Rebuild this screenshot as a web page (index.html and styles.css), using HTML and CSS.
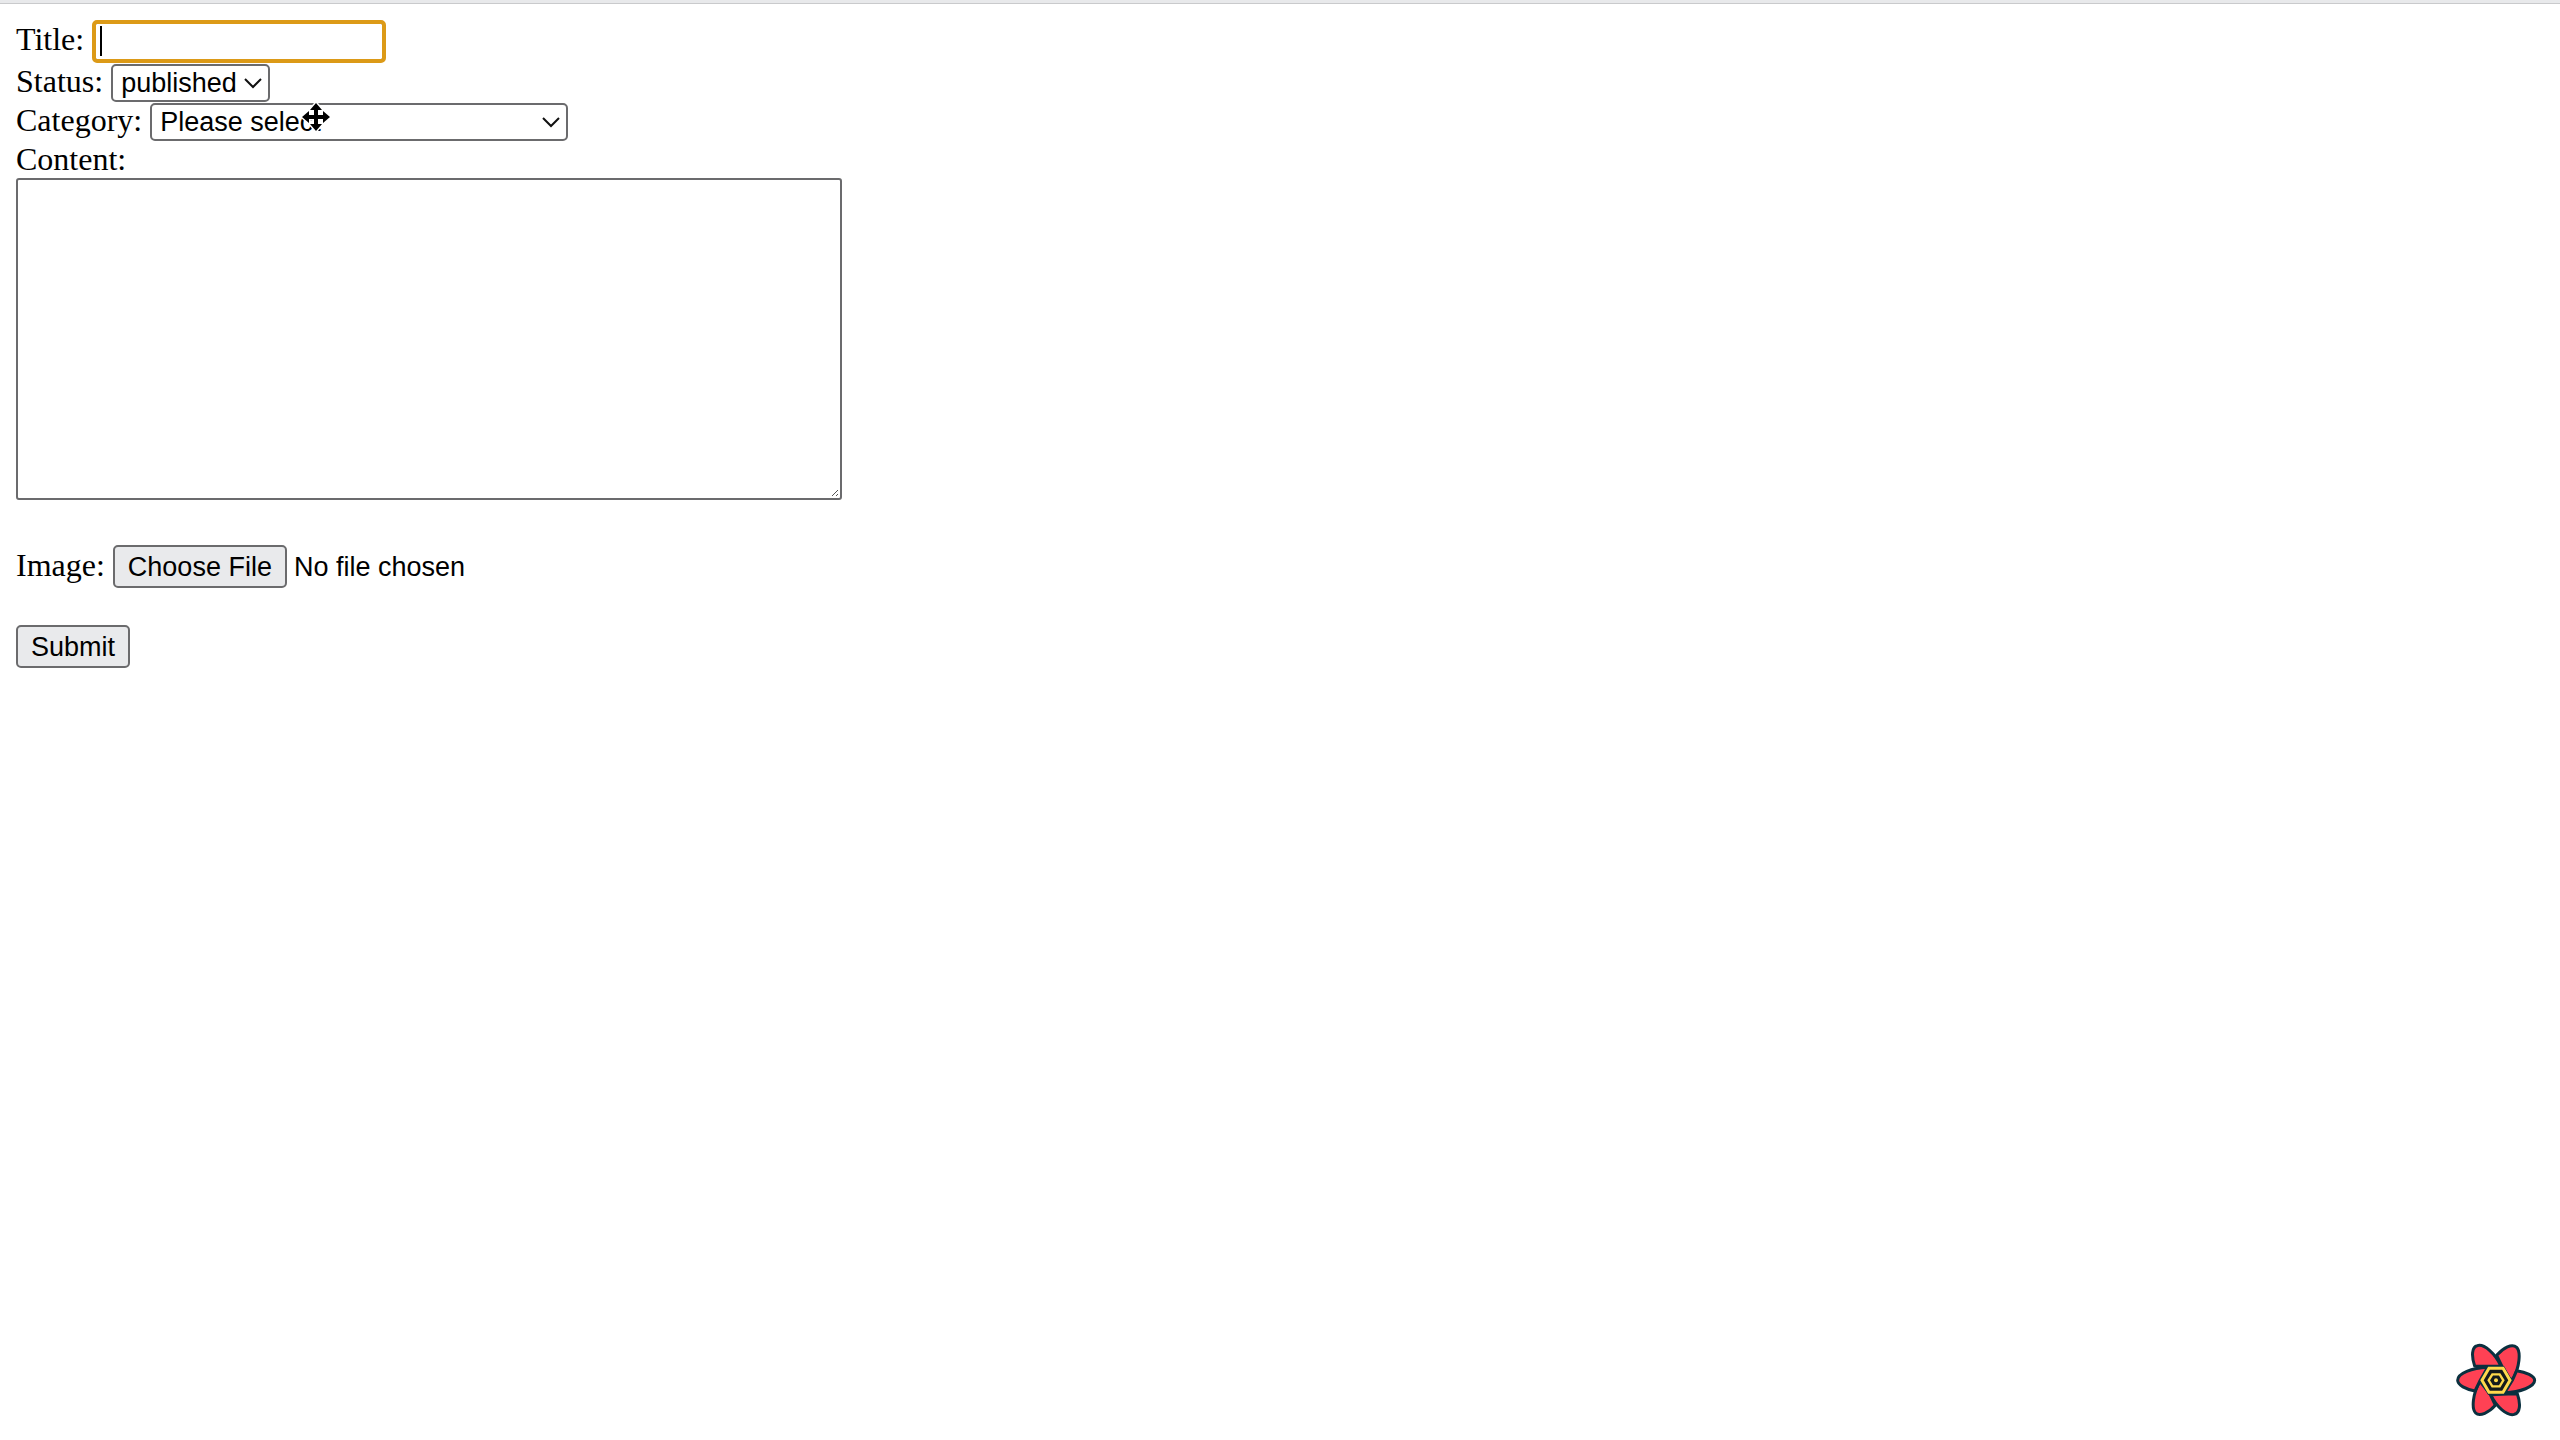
FILE: index.html
```html
<!DOCTYPE html>
<html lang="en">
<head>
<meta charset="utf-8">
<title>Post form</title>
<link rel="stylesheet" href="styles.css">
</head>
<body>
<div class="top-edge"></div>
<form class="post-form">
  <div class="row row-title">
    <label for="title">Title:</label>
    <span class="field"><input class="text-input" id="title" type="text"><span class="caret"></span></span>
  </div>
  <div class="row">
    <label for="status">Status:</label>
    <span class="field">
      <select class="select select-status" id="status"><option>published</option></select>
      <svg class="chevron" viewBox="0 0 18 12" aria-hidden="true"><path d="M1 2l8 8 8-8"/></svg>
    </span>
  </div>
  <div class="row">
    <label for="category">Category:</label>
    <span class="field">
      <select class="select select-category" id="category"><option>Please select</option></select>
      <svg class="chevron" viewBox="0 0 18 12" aria-hidden="true"><path d="M1 2l8 8 8-8"/></svg>
      <svg class="pointer" viewBox="0 0 30 30" aria-hidden="true"><path d="M15 1l6 7h-4v5h5V9l7 6-7 6v-4h-5v5h4l-6 7-6-7h4v-5H8v4l-7-6 7-6v4h5V8H9z"/></svg>
    </span>
  </div>
  <div class="row row-content"><label for="content">Content:</label></div>
  <div class="area">
    <textarea class="textarea" id="content"></textarea>
    <svg class="grip" viewBox="0 0 8 8" aria-hidden="true"><path d="M1 7l6-6M5 7l2-2"/></svg>
  </div>
  <div class="row row-file">
    <label for="image">Image:</label>
    <input class="file" id="image" type="file">
  </div>
  <button class="button" type="submit">Submit</button>
</form>
<button class="devtools" type="button" aria-label="Open query devtools">
  <svg viewBox="45 38 246 222" aria-hidden="true">
    <g fill="#ff4154" stroke="#0b303f" stroke-width="9" stroke-linejoin="round">
      <path d="M104 107C94 78 95 49 112 46C132 40 166 69 183 108Z"/>
      <path d="M170 75C190 52 216 38 230 51C243 64 239 111 218 148L207 144L186 108Z"/>
      <path d="M230 121C258 125 284 137 284 150C284 169 241 186 194 187L218 148Z"/>
      <path d="M232 190C243 222 240 248 223 252C202 258 169 230 152 193L204 191Z"/>
      <path d="M166 225C148 246 119 260 107 248C94 235 98 190 120 153L151 193Z"/>
      <path d="M105 182C78 177 53 165 53 150C53 129 96 113 143 111L119 153Z"/>
    </g>
    <path d="M144 107h48l25 43-25 43h-48l-25-43z" fill="#0b303f"/>
    <path d="M147 114h42l21 36-21 36h-42l-21-36z" fill="#151a1c" stroke="#ffd94c" stroke-width="9"/>
    <path d="M157 132h22l11 18-11 18h-22l-11-18z" fill="#151a1c" stroke="#ffd94c" stroke-width="7"/>
    <circle cx="168" cy="150" r="6" fill="#ffd94c"/>
  </svg>
</button>
</body>
</html>
```
FILE: styles.css
```css
* { box-sizing: border-box; }

body {
  margin: 0;
  background: #fff;
  color: #000;
  font: 32px/36px "Liberation Serif", "Times New Roman", serif;
}

.top-edge {
  height: 4px;
  background: #e8e9eb;
  border-bottom: 1px solid #c9cacc;
}

.post-form { padding: 17px 16px 16px; }

.row {
  display: flex;
  align-items: baseline;
  gap: 8px;
  height: 39px;
}

.row-title { height: 42px; }
.row-content { height: 37px; }

.field { position: relative; display: inline-flex; }

.text-input, .select, .textarea, .file, .button {
  font: 27px/32px "Liberation Sans", Arial, sans-serif;
  color: #000;
}

.text-input {
  width: 288px;
  height: 37px;
  margin: 0 3px;
  padding: 2px 4px;
  border: 1px solid #85868a;
  border-radius: 2px;
  outline: 4px solid #dc9a17;
  outline-offset: -1px;
}

.caret {
  position: absolute;
  left: 8px;
  top: 3px;
  width: 2px;
  height: 30px;
  background: #000;
}

.select {
  appearance: none;
  height: 38px;
  margin: 0;
  padding: 0 8px;
  border: 2px solid #6b6b6d;
  border-radius: 5px;
  background: #fff;
}

.select-status { width: 159px; }
.select-category { width: 418px; }

.chevron {
  position: absolute;
  right: 8px;
  top: 13px;
  width: 18px;
  height: 12px;
  fill: none;
  stroke: #111;
  stroke-width: 2;
}

.pointer {
  position: absolute;
  left: 151px;
  top: -1px;
  width: 30px;
  height: 30px;
  fill: #000;
  stroke: #fff;
  stroke-width: 3;
  paint-order: stroke;
}

.area { position: relative; width: 826px; }

.textarea {
  display: block;
  width: 100%;
  height: 322px;
  padding: 4px;
  border: 2px solid #6b6b6d;
  border-radius: 3px;
  resize: none;
}

.grip {
  position: absolute;
  right: 3px;
  bottom: 3px;
  width: 8px;
  height: 8px;
  stroke: #555;
}

.row-file { margin-top: 45px; height: 80px; }

.button, .file::file-selector-button {
  height: 43px;
  padding: 0 13px;
  color: #000;
  background: #e9eaec;
  border: 2px solid #6b6b6d;
  border-radius: 5px;
}

.file::file-selector-button {
  margin: 0 7px 0 0;
  font: inherit;
}

.button { display: block; }

.devtools {
  position: fixed;
  right: 23px;
  bottom: 23px;
  width: 82px;
  height: 74px;
  padding: 0;
  border: 0;
  background: none;
}

.devtools svg { display: block; width: 100%; height: 100%; }
```
